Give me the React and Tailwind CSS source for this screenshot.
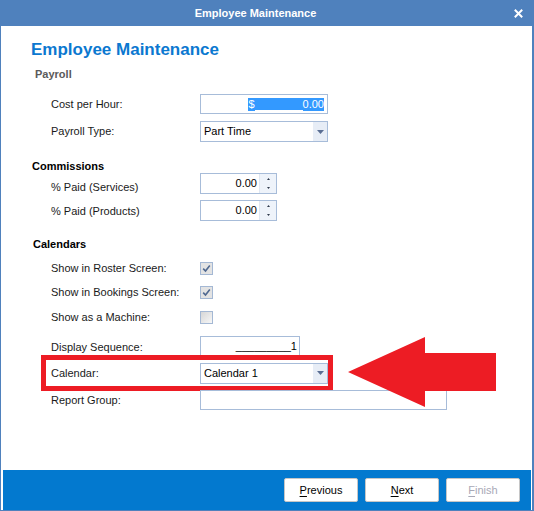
import React from "react";

const Label = ({ children, className = "" }) => (
  <div className={`w-[149px] shrink-0 text-[11px] leading-[13px] text-[#1a1a1a] ${className}`}>
    {children}
  </div>
);

const Row = ({ label, labelClass, className = "", children }) => (
  <div className={`flex items-center ml-[50px] ${className}`}>
    <Label className={labelClass}>{label}</Label>
    {children}
  </div>
);

const Dropdown = ({ value }) => (
  <div className="w-[128px] h-[21px] border border-[#a7bcd9] bg-white flex items-stretch">
    <span className="flex-1 pl-[3px] flex items-center text-[11px] text-black">{value}</span>
    <span className="w-[14px] bg-[#e7edf6] flex items-center justify-center">
      <svg width="7" height="4" viewBox="0 0 7 4">
        <path d="M0 0h7L3.5 4z" fill="#5a6e93" />
      </svg>
    </span>
  </div>
);

const Spinner = ({ value }) => (
  <div className="w-[77px] h-[21px] border border-[#a7bcd9] bg-white flex items-stretch">
    <span className="flex-1 pr-[2px] flex items-center justify-end text-[11px] text-black">{value}</span>
    <span className="w-[17px] flex flex-col bg-[#eef3fa] border-l border-[#dfe7f2]">
      <span className="flex-1 flex items-center justify-center">
        <svg width="3" height="2" viewBox="0 0 3 2">
          <path d="M0 2h3L1.5 0z" fill="#2f3a4c" />
        </svg>
      </span>
      <span className="flex-1 flex items-center justify-center">
        <svg width="3" height="2" viewBox="0 0 3 2">
          <path d="M0 0h3L1.5 2z" fill="#2f3a4c" />
        </svg>
      </span>
    </span>
  </div>
);

const Check = ({ checked }) => (
  <div
    className={`w-[13px] h-[13px] border border-[#a4b8d4] flex items-center justify-center ${
      checked ? "bg-[#e3e3e3]" : "bg-linear-to-br from-[#d6d6d6] to-[#f7f7f7]"
    }`}
  >
    {checked && (
      <svg width="9" height="9" viewBox="0 0 9 9">
        <path d="M1.2 4.6l2.3 2.4L7.8 1.4" stroke="#4f6890" strokeWidth="1.6" fill="none" />
      </svg>
    )}
  </div>
);

const Btn = ({ k, rest, disabled }) => (
  <button
    className={`w-[74px] h-[24px] bg-white border border-[#c6c6c6] rounded-[2px] text-[11px] ${
      disabled ? "text-[#a8a8b6]" : "text-black"
    }`}
  >
    <span className="underline underline-offset-2">{k}</span>
    {rest}
  </button>
);

export default function App() {
  return (
    <div className="relative w-[534px] h-[511px] bg-white flex flex-col overflow-hidden font-['Liberation_Sans',Arial,sans-serif]">
      {/* title bar */}
      <div className="h-[26px] shrink-0 bg-[#4f81bd] flex items-center">
        <div className="flex-1 text-center text-[11px] font-bold text-white">Employee Maintenance</div>
        <svg className="ml-[3px] mr-[11px]" width="9" height="9" viewBox="0 0 9 9">
          <path d="M0.8 0.8l7.4 7.4M8.2 0.8L0.8 8.2" stroke="#fff" strokeWidth="2" />
        </svg>
      </div>

      <div className="flex-1 flex flex-col border-l border-r-2 border-b border-[#4f81bd]">
        {/* form */}
        <div className="flex-1 flex flex-col">
          <div className="mt-[12px] h-[24px] ml-[30px] flex items-center text-[17px] font-bold text-[#0b78d0]">
            Employee Maintenance
          </div>
          <div className="mt-[5px] h-[14px] ml-[34px] flex items-center text-[11px] font-bold text-[#5a5a5a]">
            Payroll
          </div>

          <Row label="Cost per Hour:" className="mt-[13px] h-[20px]">
            <div className="w-[128px] h-[20px] border border-[#a7bcd9] bg-white flex items-center justify-end pr-[3px]">
              <span className="bg-[#3399ff] text-white text-[11px] leading-[13px] flex items-end">
                $<span className="inline-block w-[48px] h-[11px] border-b border-white" />0.00
              </span>
            </div>
          </Row>
          <Row label="Payroll Type:" className="mt-[7px] h-[21px]">
            <Dropdown value="Part Time" />
          </Row>

          <div className="mt-[17px] h-[14px] ml-[31px] flex items-center text-[11px] font-bold text-black">
            Commissions
          </div>
          <Row label="% Paid (Services)" labelClass="pt-[7px]" className="h-[21px]">
            <Spinner value="0.00" />
          </Row>
          <Row label="% Paid (Products)" labelClass="pt-[2px]" className="mt-[6px] h-[21px]">
            <Spinner value="0.00" />
          </Row>

          <div className="mt-[16px] h-[14px] ml-[32px] flex items-center text-[11px] font-bold text-black">
            Calendars
          </div>
          <Row label="Show in Roster Screen:" className="mt-[10px] h-[14px]">
            <Check checked />
          </Row>
          <Row label="Show in Bookings Screen:" className="mt-[10px] h-[14px]">
            <Check checked />
          </Row>
          <Row label="Show as a Machine:" className="mt-[11px] h-[14px]">
            <Check />
          </Row>
          <Row label="Display Sequence:" labelClass="pt-[2px]" className="mt-[12px] h-[20px]">
            <div className="w-[100px] h-[20px] border border-[#a7bcd9] bg-white flex items-center justify-end pr-[2px]">
              <span className="text-[11px] text-black">_________1</span>
            </div>
          </Row>

          {/* highlighted row */}
          <div className="-mt-[1px] ml-[40px] w-[292px] h-[36px] border-[5px] border-[#ed1c24] flex items-center pl-[5px]">
            <Label>Calendar:</Label>
            <Dropdown value="Calendar 1" />
          </div>

          <Row label="Report Group:" className="-mt-[1px] h-[20px]">
            <div className="w-[247px] h-[20px] border border-[#a7bcd9] bg-white" />
          </Row>
        </div>

        {/* footer */}
        <div className="h-[40px] shrink-0 ml-[2px] mr-[1px] bg-[#0379cf] flex items-center justify-end gap-[7px] pr-[11px]">
          <Btn k="P" rest="revious" />
          <Btn k="N" rest="ext" />
          <Btn k="F" rest="inish" disabled />
        </div>
      </div>

      {/* annotation arrow */}
      <svg className="absolute left-[348px] top-[337px]" width="149" height="71" viewBox="0 0 149 71">
        <path d="M0 35 L77 0 L77 16 L148 16 L148 54 L77 54 L77 70 Z" fill="#ed1c24" />
      </svg>
    </div>
  );
}
